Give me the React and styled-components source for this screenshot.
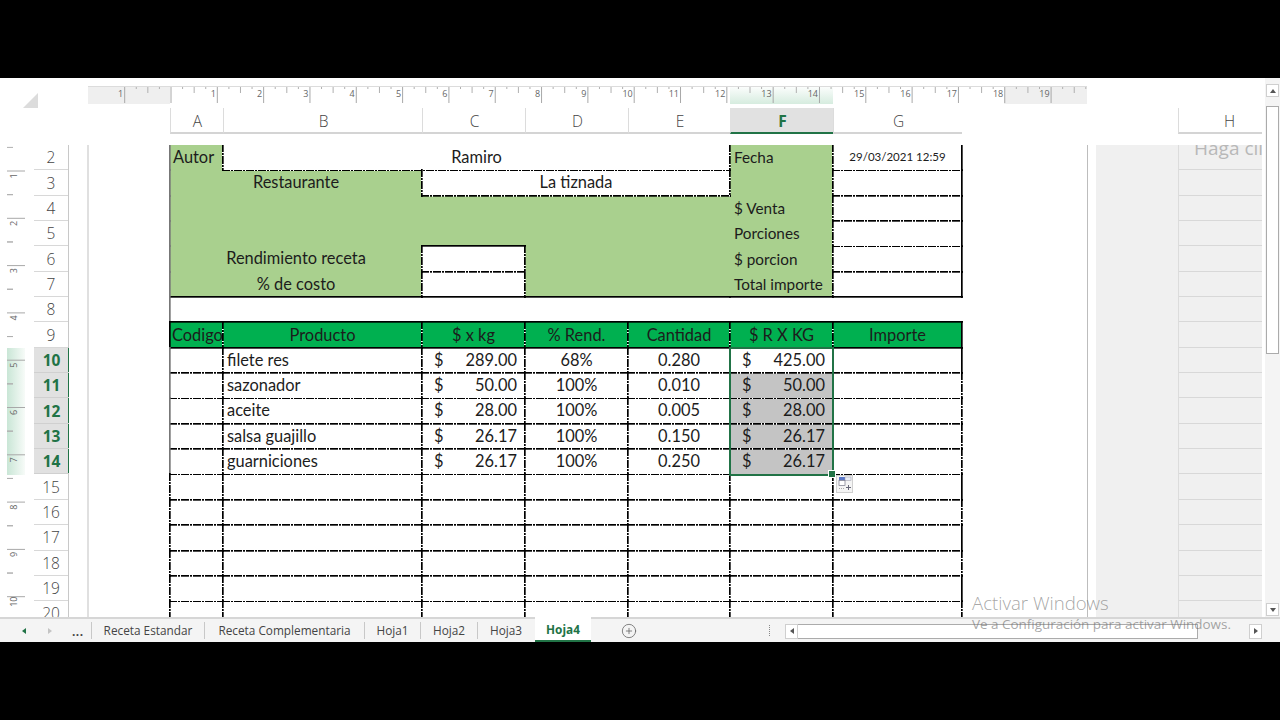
import React from "react";
import styled, { createGlobalStyle, css } from "styled-components";
import { CirclePlus } from "lucide-react";

const ROW_H = 25.35;
const COLS = [53, 199, 103, 103, 102, 103, 129];

const Global = createGlobalStyle`
  html, body { margin: 0; padding: 0; background: #000; overflow: hidden; }
`;

const Page = styled.div`
  width: 1280px; height: 720px; display: flex; flex-direction: column; background: #000;
`;
const Letterbox = styled.div`height: 78px; flex: none; background: #000;`;
const Window = styled.div`
  position: relative; height: 564px; flex: none; display: flex; flex-direction: column;
  background: #fff; overflow: hidden; font-family: "Open Sans", "Liberation Sans", sans-serif;
`;
const Upper = styled.div`flex: 1; min-height: 0; display: flex;`;
const Main = styled.div`width: 1265px; flex: none; display: flex; flex-direction: column;`;

/* top ruler */
const RulerRow = styled.div`height: 30px; flex: none; display: flex; padding-top: 8px; box-sizing: border-box;`;
const CornerCell = styled.div`width: 88px; flex: none; padding: 6px 0 0 23px; box-sizing: border-box;`;

/* column headers */
const HeaderRow = styled.div`height: 26px; flex: none; display: flex;`;
const HeaderGutter = styled.div`width: 170px; flex: none;`;
const HeaderSpacer = styled.div`width: 216px; flex: none;`;
const ColHead = styled.div`
  width: ${p => p.$w}px; flex: none; box-sizing: border-box; display: flex; align-items: center; justify-content: center;
  padding: 2px 0 0 ${p => p.$indent || 1}px;
  font-size: 15.5px; font-weight: ${p => (p.$on ? 700 : 300)};
  color: ${p => (p.$on ? "#217346" : "#444")};
  background: ${p => (p.$on ? "#e1e1e1" : "#fff")};
  border-left: 1px solid ${p => (p.$on ? "#e1e1e1" : "#dcdcdc")};
  border-bottom: 2px solid ${p => (p.$on ? "#217346" : "#d4d4d4")};
`;

/* sheet */
const SheetArea = styled.div`
  flex: 1; min-height: 0; margin-top: 11px; display: flex; overflow: hidden;
`;
const VRulerCell = styled.div`width: 34px; flex: none; padding-left: 7px; box-sizing: border-box;`;
const RowHeads = styled.div`width: 35px; flex: none; box-sizing: border-box; border-right: 1px solid #c8c8c8;`;
const RowHead = styled.div`
  height: ${ROW_H}px; box-sizing: border-box; display: flex; align-items: center; justify-content: center;
  font-size: 15.5px; font-weight: ${p => (p.$on ? 700 : 300)};
  color: ${p => (p.$on ? "#217346" : "#444")};
  background: ${p => (p.$on ? "#e1e1e1" : "#fff")};
  border-bottom: 1px solid ${p => (p.$on ? "#d0d0d0" : "#d8d8d8")};
  ${p => p.$on && css`box-shadow: inset -1px 0 0 #217346; margin-right: -1px;`}
`;
const Gutter = styled.div`width: 101px; flex: none; padding-left: 18px; box-sizing: border-box;`;
const GutterLine = styled.div`width: 2px; height: 100%; background: #e0e0e0;`;

const Grid = styled.div`
  position: relative; width: 792px; flex: none; display: grid; align-content: start;
  grid-template-columns: ${COLS.map(c => c + "px").join(" ")};
  grid-auto-rows: ${ROW_H}px;
  font-family: Lato, "Liberation Sans", sans-serif; color: #1c1c1c;
`;

const DASH = "#000 0 8px,#fff 8px 9.2px,#000 9.2px 10.8px,#fff 10.8px 12px";
const DASH_H = `repeating-linear-gradient(90deg,${DASH})`;
const DASH_V = `repeating-linear-gradient(180deg,${DASH})`;
const SOLID = "linear-gradient(#000,#000)";
const GRAY = "linear-gradient(#777,#777)";

const edge = (kind, side) => {
  if (!kind) return null;
  const horizontal = side === "top" || side === "bottom";
  const img = kind === "d" ? (horizontal ? DASH_H : DASH_V) : kind === "g" ? GRAY : SOLID;
  const size = horizontal ? "100% 1.7px" : "1.7px 100%";
  const pos = { top: "0 0", bottom: "0 100%", left: "0 0", right: "100% 0" }[side];
  return `${img} ${pos} / ${size} no-repeat`;
};

const Cell = styled.div`
  position: relative; grid-column: span ${p => p.$span || 1}; min-width: 0; box-sizing: border-box;
  display: flex; align-items: center; white-space: nowrap; overflow: visible;
  justify-content: ${p => p.$align || "flex-start"};
  padding: ${p => p.$pad || "0 3px"};
  padding-bottom: ${p => p.$pb ?? 2.5}px;
  background: ${p => p.$bg || "#fff"};
  font-size: ${p => p.$size || 16.4}px;
  ${p => p.$edges && css`
    &::after {
      content: ""; position: absolute; inset: -1px; pointer-events: none; z-index: 1;
      background: ${p.$edges};
    }
  `}
`;
const CellText = styled.span`position: relative; z-index: 2;`;

const Selection = styled.div`
  position: absolute; z-index: 3; left: 560px; top: ${ROW_H * 8}px;
  box-sizing: border-box; margin: -1px 0 0 -1px; border: 2px solid #217346; width: 105px; height: ${ROW_H * 5 + 2}px;
`;
const FillHandle = styled.div`
  position: absolute; right: -4px; bottom: -4px; width: 6px; height: 6px; background: #217346; border: 1px solid #fff;
`;
const PasteOptions = styled.div`
  position: absolute; left: 105px; top: 126px; width: 17px; height: 18px; box-sizing: border-box;
  background: #f4f4f4; border: 1px solid #d0d0d0; display: flex; align-items: center; justify-content: center;
`;

const BlankRight = styled.div`width: 125px; flex: none; border-right: 1px solid #bdbdbd; box-sizing: content-box;`;
const ThinGap = styled.div`width: 8px; flex: none;`;
const GrayPanel = styled.div`width: 82px; flex: none; background: #f0f0f0;`;
const HCol = styled.div`width: 84px; flex: none; background: #f0f0f0; border-left: 1px solid #dcdcdc; box-sizing: border-box;`;
const HRow = styled.div`
  height: ${ROW_H}px; box-sizing: border-box; border-bottom: 1px solid #d8d8d8; overflow: hidden;
  padding-left: 15px; color: #b8b8b8; font-size: 19px; white-space: nowrap; font-weight: 400; line-height: 24px;
`;
const HText = styled.div`margin-top: -9px;`;

/* right scrollbar */
const VScroll = styled.div`
  width: 15px; flex: none; background: #f4f4f4; display: flex; flex-direction: column; align-items: flex-end; padding-right: 1px;
  box-sizing: border-box; padding-top: 6px; padding-bottom: 1px;
`;
const ScrollBtn = styled.div`
  width: 13px; height: 13px; flex: none; box-sizing: border-box; background: #fff; border: 1px solid #cfcfcf;
  display: flex; align-items: center; justify-content: center;
`;
const VThumb = styled.div`
  width: 13px; height: 248px; margin-top: 9px; flex: none; box-sizing: border-box; background: #fff; border: 1px solid #ababab;
`;
const VSpace = styled.div`flex: 1;`;

/* tab bar */
const TabBar = styled.div`
  height: 25px; flex: none; display: flex; align-items: stretch; box-sizing: border-box;
  background: #f4f4f4; border-top: 2px solid #d6d6d6; font-size: 11.8px; color: #444;
`;
const NavArea = styled.div`
  width: 92px; flex: none; display: flex; align-items: center; padding-left: 20px; gap: 18px; box-sizing: border-box;
  border-right: 1px solid #c8c8c8; margin: 3px 0;
`;
const More = styled.span`font-weight: 700; letter-spacing: 0.5px; color: #444;`;
const Tab = styled.div`
  flex: none; width: ${p => p.$w}px; box-sizing: border-box; display: flex; align-items: center; justify-content: center;
  ${p => p.$on ? css`
    background: #fff; color: #217346; font-weight: 700; border-bottom: 2px solid #217346; margin-top: -2px;
  ` : css`
    margin: 3px 0; padding-bottom: 2px; border-right: 1px solid ${p.$noLine ? "transparent" : "#c8c8c8"};
  `}
`;
const AddTab = styled.div`
  width: 76px; flex: none; display: flex; align-items: center; padding-left: 30px; box-sizing: border-box; color: #666;
`;
const Splitter = styled.div`
  width: 118px; flex: none; display: flex; align-items: center; padding-left: 102px; box-sizing: border-box;
  color: #999; font-size: 12px;
`;
const SplitDots = styled.div`width: 1px; height: 11px; border-left: 1.5px dotted #888;`;
const HScroll = styled.div`
  width: 477px; flex: none; display: flex; align-items: center; box-sizing: border-box; padding-top: 1px;
`;
const HThumb = styled.div`
  width: 400px; height: 15px; box-sizing: border-box; background: #fff; border: 1px solid #ababab; border-left: 0;
`;
const HTrack = styled.div`width: 51px; height: 15px; flex: none;`;
const HBtn = styled(ScrollBtn)`height: 15px; width: 13px;`;

const Watermark = styled.div`
  position: absolute; left: 972px; top: 512px; pointer-events: none; z-index: 5; color: rgba(110,110,110,.62);
  font-family: "Open Sans", "Liberation Sans", sans-serif;
`;
const WaterTitle = styled.div`font-size: 18.6px; line-height: 25px; font-weight: 300;`;
const WaterSub = styled.div`font-size: 13.45px; line-height: 18px; margin-top: 0;`;

/* drawings */
const Arrow = ({ dir, color = "#555" }) => {
  const pts = { up: "1,6 4,2 7,6", down: "1,2 4,6 7,2", left: "6,1 2,4 6,7", right: "2,1 6,4 2,7" }[dir];
  return <svg width="8" height="8" viewBox="0 0 8 8"><polygon points={pts} fill={color} /></svg>;
};

const Corner = () => (
  <svg width="16" height="16" viewBox="0 0 16 16"><polygon points="15,0 15,15 0,15" fill="#dcdcdc" /></svg>
);

const TopRuler = () => {
  const X0 = 88, items = [];
  const px = x => x - X0;
  for (let k = -1; k <= 20; k++) {
    const x = 171 + 46.32 * k;
    if (x > 1087) break;
    items.push(<line key={"m" + k} x1={px(x)} x2={px(x)} y1="1" y2="17" stroke="#a8a8a8" strokeWidth="1" />);
    const lab = k < 0 ? 1 : k;
    if (k !== 0 && k <= 19) items.push(
      <text key={"t" + k} x={px(x) - 1.5} y="11" textAnchor="end" fontSize="9" fill="#666" fontFamily="Open Sans">{lab}</text>
    );
    for (const [f, y2] of [[0.25, 3], [0.5, 7], [0.75, 3]]) {
      const xx = x + 46.32 * f;
      if (xx < 1087) items.push(<line key={"h" + k + f} x1={px(xx)} x2={px(xx)} y1="1" y2={y2} stroke="#b0b0b0" strokeWidth="1" />);
    }
  }
  return (
    <svg width="999" height="18" viewBox="0 0 999 18">
      <defs>
        <linearGradient id="hg" x1="0" y1="0" x2="0" y2="1">
          <stop offset="0" stopColor="#fbfdfc" /><stop offset="1" stopColor="#d6ecdf" />
        </linearGradient>
      </defs>
      <rect x="0" y="1" width="82" height="17" fill="#efefef" />
      <rect x="916" y="1" width="83" height="17" fill="#efefef" />
      <rect x={642} y="1" width="103" height="17" fill="url(#hg)" />
      <line x1="0" x2="999" y1="0.5" y2="0.5" stroke="#dcdcdc" />
      {items}
    </svg>
  );
};

const SideRuler = () => {
  const Y0 = 145, items = [];
  for (let k = 0; k <= 9; k++) {
    const y = 171 + 47.3 * k - Y0;
    items.push(<line key={"m" + k} x1="0" x2="18" y1={y} y2={y} stroke="#a8a8a8" />);
    items.push(
      <text key={"t" + k} x="0" y="0" fontSize="9" fill="#666" textAnchor="middle" fontFamily="Open Sans"
        transform={`translate(10 ${y + 5}) rotate(-90)`}>{k + 1}</text>
    );
    items.push(<line key={"h" + k} x1="0" x2="6" y1={y + 23.6} y2={y + 23.6} stroke="#b0b0b0" />);
    items.push(<line key={"q" + k} x1="0" x2="6" y1={y - 23.6} y2={y - 23.6} stroke="#b0b0b0" />);
  }
  return (
    <svg width="27" height="472" viewBox="0 0 27 472">
      <defs>
        <linearGradient id="vg" x1="0" y1="0" x2="1" y2="0">
          <stop offset="0" stopColor="#c9e6d6" /><stop offset="1" stopColor="#f7fbf8" />
        </linearGradient>
      </defs>
      <rect x="0" y="203" width="18" height="127" fill="url(#vg)" />
      {items}
    </svg>
  );
};

const PasteIcon = () => (
  <svg width="14" height="15" viewBox="0 0 14 15">
    <rect x="1" y="1" width="6" height="3.5" fill="#5b78c8" />
    <rect x="7" y="1" width="6" height="3.5" fill="#e9edf5" stroke="#99a" strokeWidth=".5" />
    <rect x="1" y="4.5" width="6" height="5" fill="#fff" stroke="#778" strokeWidth=".7" />
    <line x1="1" x2="7" y1="12.5" y2="12.5" stroke="#aaa" strokeDasharray="1 1" />
    <path d="M10.5 9v5M8 11.5h5" stroke="#667" strokeWidth="1" />
  </svg>
);

/* data */
const LIGHT = "#a9d08e", HEAD = "#00b050", SEL = "#c4c4c4";
const label = { bg: LIGHT, r: "d", size: 15.3, pad: "0 3px 0 4px", pb: 1 };

const c = (text, opts = {}) => ({ text, ...opts });

const topRows = [
  [
    c("Autor", { bg: LIGHT, r: "d", l: "g" }),
    c("Ramiro", { span: 4, align: "center", b: "d", r: "d" }),
    c("Fecha", label),
    c("29/03/2021 12:59", { align: "center", size: 11.5, b: "d", r: "s" }),
  ],
  [
    c("Restaurante", { span: 2, bg: LIGHT, align: "center", r: "d", l: "g" }),
    c("La tiznada", { span: 3, align: "center", b: "d", r: "d" }),
    c("", { bg: LIGHT, r: "d" }),
    c("", { b: "d", r: "s" }),
  ],
  [
    c("", { span: 5, bg: LIGHT, l: "g" }),
    c("$ Venta", label),
    c("", { b: "d", r: "s" }),
  ],
  [
    c("", { span: 5, bg: LIGHT, l: "g" }),
    c("Porciones", label),
    c("", { b: "d", r: "s" }),
  ],
  [
    c("Rendimiento receta", { span: 2, bg: LIGHT, align: "center", r: "d", l: "g" }),
    c("", { t: "s", b: "d", r: "d" }),
    c("", { span: 2, bg: LIGHT }),
    c("$ porcion", label),
    c("", { b: "d", r: "s" }),
  ],
  [
    c("% de costo", { span: 2, bg: LIGHT, align: "center", r: "d", b: "s", l: "g" }),
    c("", { b: "s", r: "d" }),
    c("", { span: 2, bg: LIGHT, b: "s" }),
    c("Total importe", { ...label, b: "s" }),
    c("", { b: "s", r: "s" }),
  ],
  [c("", { span: 7, l: "g" })],
  ["Codigo", "Producto", "$ x kg", "% Rend.", "Cantidad", "$ R X KG", "Importe"].map((t, i) =>
    c(t, { bg: HEAD, pb: 1, align: i === 0 ? "flex-start" : "center", t: "s", b: "s", r: i === 6 ? "s" : "d", l: i === 0 ? "s" : undefined, pad: i === 0 ? "0 0 0 2px" : undefined })
  ),
];

const products = [
  ["filete res", "289.00", "68%", "0.280", "425.00"],
  ["sazonador", "50.00", "100%", "0.010", "50.00"],
  ["aceite", "28.00", "100%", "0.005", "28.00"],
  ["salsa guajillo", "26.17", "100%", "0.150", "26.17"],
  ["guarniciones", "26.17", "100%", "0.250", "26.17"],
];

const MoneyWrap = styled.div`
  width: 100%; display: flex; justify-content: space-between; padding: 0 8px 0 12px; box-sizing: border-box; position: relative; z-index: 2;
`;
const Money = ({ v }) => <MoneyWrap><span>$</span><span>{v}</span></MoneyWrap>;

const dataRow = (p, i) => {
  const base = { b: "d", r: "d" };
  return [
    c("", { ...base, l: i < 5 ? "g" : "d" }),
    c(p ? p[0] : "", { ...base, pad: "0 3px 0 4px" }),
    c(p ? <Money v={p[1]} /> : "", { ...base, pad: "0" }),
    c(p ? p[2] : "", { ...base, align: "center" }),
    c(p ? p[3] : "", { ...base, align: "center" }),
    c(p ? <Money v={p[4]} /> : "", { ...base, pad: "0", bg: p && i > 0 ? SEL : undefined }),
    c("", { ...base, r: i === 0 || (i > 4 && i % 2 === 1) ? "s" : "d" }),
  ];
};

const allRows = [...topRows, ...Array.from({ length: 11 }, (_, i) => dataRow(products[i], i))];
const rowNums = Array.from({ length: 19 }, (_, i) => i + 2);

const tabs = [
  ["Receta Estandar", 113], ["Receta Complementaria", 160], ["Hoja1", 56], ["Hoja2", 57], ["Hoja3", 57, true], ["Hoja4", 56, false, true],
];

const edgesOf = o =>
  [edge(o.t, "top"), edge(o.b, "bottom"), edge(o.l, "left"), edge(o.r, "right")].filter(Boolean).join(",");

export default function App() {
  return (
    <Page>
      <Global />
      <Letterbox />
      <Window>
        <Upper>
          <Main>
            <RulerRow>
              <CornerCell><Corner /></CornerCell>
              <TopRuler />
            </RulerRow>
            <HeaderRow>
              <HeaderGutter />
              {"ABCDEFG".split("").map((l, i) => <ColHead key={l} $w={COLS[i]} $on={l === "F"}>{l}</ColHead>)}
              <HeaderSpacer />
              <ColHead $w={84} $indent={18}>H</ColHead>
            </HeaderRow>
            <SheetArea>
              <VRulerCell><SideRuler /></VRulerCell>
              <RowHeads>
                {rowNums.map(n => <RowHead key={n} $on={n >= 10 && n <= 14}>{n}</RowHead>)}
              </RowHeads>
              <Gutter><GutterLine /></Gutter>
              <Grid>
                {allRows.map((row, r) => row.map((o, i) => (
                  <Cell key={r + "-" + i} $span={o.span} $align={o.align} $bg={o.bg} $size={o.size} $pad={o.pad} $pb={o.pb} $edges={edgesOf(o)}>
                    {typeof o.text === "string" ? <CellText>{o.text}</CellText> : o.text}
                  </Cell>
                )))}
                <Selection>
                  <FillHandle />
                  <PasteOptions><PasteIcon /></PasteOptions>
                </Selection>
              </Grid>
              <BlankRight />
              <ThinGap />
              <GrayPanel />
              <HCol>
                {rowNums.map(n => <HRow key={n}>{n === 2 && <HText>Haga cli</HText>}</HRow>)}
              </HCol>
            </SheetArea>
          </Main>
          <VScroll>
            <ScrollBtn><Arrow dir="up" /></ScrollBtn>
            <VThumb />
            <VSpace />
            <ScrollBtn><Arrow dir="down" /></ScrollBtn>
          </VScroll>
        </Upper>
        <TabBar>
          <NavArea>
            <Arrow dir="left" color="#217346" />
            <Arrow dir="right" color="#c4c4c4" />
            <More>...</More>
          </NavArea>
          {tabs.map(([t, w, noLine, on]) => <Tab key={t} $w={w} $noLine={noLine} $on={on}>{t}</Tab>)}
          <AddTab><CirclePlus size={16} strokeWidth={1.2} /></AddTab>
          <Splitter><SplitDots /></Splitter>
          <HScroll>
            <HBtn><Arrow dir="left" /></HBtn>
            <HThumb />
            <HTrack />
            <HBtn><Arrow dir="right" /></HBtn>
          </HScroll>
        </TabBar>
        <Watermark>
          <WaterTitle>Activar Windows</WaterTitle>
          <WaterSub>Ve a Configuración para activar Windows.</WaterSub>
        </Watermark>
      </Window>
      <Letterbox />
    </Page>
  );
}
